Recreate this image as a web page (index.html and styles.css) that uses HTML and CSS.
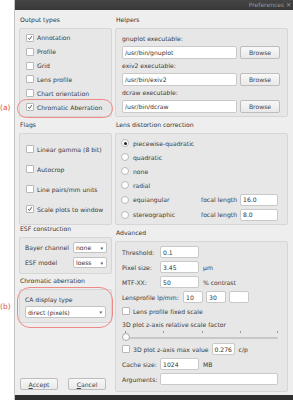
FILE: index.html
```html
<!DOCTYPE html>
<html>
<head>
<meta charset="utf-8">
<link rel="stylesheet" href="styles.css">
</head>
<body>
<div class="stage">
  <div class="gutter"></div>
  <div class="window">
    <div class="titlebar"><span class="title">Preferences ✕</span></div>
    <div class="content">
      <!-- row 1 -->
      <div class="sec-label">Output types</div>
      <div class="sec-label">Helpers</div>
      <div class="box box-output">
        <div class="crow"><span class="cb on"><svg viewBox="0 0 8 8"><path d="M1.6 4.2 L3.3 6 L6.4 1.6"/></svg></span>Annotation</div>
        <div class="crow"><span class="cb"></span>Profile</div>
        <div class="crow"><span class="cb"></span>Grid</div>
        <div class="crow"><span class="cb"></span>Lens profile</div>
        <div class="crow"><span class="cb"></span>Chart orientation</div>
        <div class="crow"><span class="cb on"><svg viewBox="0 0 8 8"><path d="M1.6 4.2 L3.3 6 L6.4 1.6"/></svg></span>Chromatic Aberration</div>
      </div>
      <div class="box box-helpers">
        <div class="hlabel">gnuplot executable:</div>
        <div class="hrow"><span class="input wide">/usr/bin/gnuplot</span><span class="btn browse">Browse</span></div>
        <div class="hlabel">exiv2 executable:</div>
        <div class="hrow"><span class="input wide">/usr/bin/exiv2</span><span class="btn browse">Browse</span></div>
        <div class="hlabel">dcraw executable:</div>
        <div class="hrow"><span class="input wide">/usr/bin/dcraw</span><span class="btn browse">Browse</span></div>
      </div>
      <!-- row 2 -->
      <div class="sec-label">Flags</div>
      <div class="sec-label">Lens distortion correction</div>
      <div class="box box-flags">
        <div class="frow"><span class="cb"></span>Linear gamma (8 bit)</div>
        <div class="frow"><span class="cb"></span>Autocrop</div>
        <div class="frow"><span class="cb"></span>Line pairs/mm units</div>
        <div class="frow"><span class="cb on"><svg viewBox="0 0 8 8"><path d="M1.6 4.2 L3.3 6 L6.4 1.6"/></svg></span>Scale plots to window</div>
      </div>
      <div class="box box-lens">
        <div class="rrow"><span class="rb on"></span>piecewise-quadratic</div>
        <div class="rrow"><span class="rb"></span>quadratic</div>
        <div class="rrow"><span class="rb"></span>none</div>
        <div class="rrow"><span class="rb"></span>radial</div>
        <div class="rrow tall"><span class="rb"></span><span class="grow">equiangular</span><span class="flabel">focal length</span><span class="input focal">16.0</span></div>
        <div class="rrow tall"><span class="rb"></span><span class="grow">stereographic</span><span class="flabel">focal length</span><span class="input focal">8.0</span></div>
      </div>
      <!-- row 3 -->
      <div class="leftcol">
        <div class="sec-label">ESF construction</div>
        <div class="box box-esf">
          <div class="erow"><span class="grow">Bayer channel</span><span class="select esf">none<i>▾</i></span></div>
          <div class="erow"><span class="grow">ESF model</span><span class="select esf">loess<i>▾</i></span></div>
        </div>
        <div class="sec-label ca-label">Chromatic aberration</div>
        <div class="box box-ca">
          <div class="ca-title">CA display type</div>
          <span class="select ca">direct (pixels)<i>▾</i></span>
        </div>
        <div class="buttons">
          <span class="btn action"><u>A</u>ccept</span>
          <span class="btn action"><u>C</u>ancel</span>
        </div>
      </div>
      <div class="rightcol">
        <div class="sec-label">Advanced</div>
        <div class="box box-adv">
          <div class="arow"><span class="alabel">Threshold:</span><span class="input num">0.1</span></div>
          <div class="arow"><span class="alabel">Pixel size:</span><span class="input num">3.45</span><span class="unit">µm</span></div>
          <div class="arow"><span class="alabel">MTF-XX:</span><span class="input num">50</span><span class="unit">% contrast</span></div>
          <div class="arow"><span class="lplabel">Lensprofile lp/mm:</span><span class="input lp">10</span><span class="input lp">30</span><span class="input lp"></span></div>
          <div class="arow chk"><span class="cb"></span>Lens profile fixed scale</div>
          <div class="arow txt">3D plot z-axis relative scale factor</div>
          <div class="slider">
            <div class="ticks"><i style="left:3px"></i><i style="left:41px"></i><i style="left:80px"></i><i style="left:118px"></i><i style="left:155px"></i></div>
            <div class="track"></div>
            <span class="handle"></span>
          </div>
          <div class="arow chk"><span class="cb"></span><span class="zlabel">3D plot z-axis max value</span><span class="input zval">0.276</span><span class="unit">c/p</span></div>
          <div class="arow cache"><span class="alabel">Cache size:</span><span class="input num">1024</span><span class="unit">MB</span></div>
          <div class="arow args"><span class="alabel">Arguments:</span><span class="input argin"></span></div>
        </div>
      </div>
    </div>
    <div class="bottombar"></div>
  </div>
  <span class="note note-a">(a)</span>
  <span class="note note-b">(b)</span>
  <span class="ring ring-a"></span>
  <span class="ring ring-b"></span>
</div>
</body>
</html>
```

FILE: styles.css
```css
* { box-sizing: border-box; }
html, body { margin: 0; padding: 0; background: #ffffff; }
body {
  font-family: "DejaVu Sans", Verdana, sans-serif;
  font-size: 6.1px;
  color: #3a3a3a;
  width: 293px;
  height: 400px;
  overflow: hidden;
}
.stage { position: relative; display: flex; width: 293px; height: 400px; }
.gutter { width: 14px; flex: none; }
.window {
  width: 279px;
  height: 400px;
  background: #eeeeee;
  display: flex;
  flex-direction: column;
  border-left: 1px solid #c4c4c4;
}
.titlebar {
  height: 10px;
  flex: none;
  background: linear-gradient(#454545, #383838);
  display: flex;
  justify-content: flex-end;
  align-items: center;
  padding-right: 2px;
}
.title { color: #9a9a9a; font-size: 6px; line-height: 10px; }
.content {
  flex: 1;
  display: grid;
  grid-template-columns: 93px 173px;
  grid-template-rows: 18px 89px 16px 92px 1fr;
  column-gap: 3px;
  padding-left: 4px;
}
.sec-label {
  display: flex;
  align-items: flex-end;
  padding: 0 0 4px 1px;
  color: #333;
  line-height: 8px;
}
.box {
  background: #e7e7e7;
  border: 1px solid #d6d6d6;
  border-radius: 2px;
}
.cb {
  width: 8px;
  height: 8px;
  flex: none;
  background: #fff;
  border: 1px solid #b8b8b8;
  border-radius: 1px;
  margin-right: 3px;
  display: inline-flex;
}
.cb svg { width: 6px; height: 6px; }
.cb svg path { fill: none; stroke: #333; stroke-width: 1.1; }
.rb {
  width: 8px;
  height: 8px;
  flex: none;
  background: #fff;
  border: 1px solid #b8b8b8;
  border-radius: 50%;
  margin-right: 4px;
  display: inline-flex;
  align-items: center;
  justify-content: center;
}
.rb.on::after { content: ""; width: 3px; height: 3px; border-radius: 50%; background: #222; }
.input {
  background: #fff;
  border: 1px solid #c9c9c9;
  border-radius: 2px;
  height: 12px;
  display: inline-flex;
  align-items: center;
  padding-left: 2px;
  color: #333;
  flex: none;
}
.btn {
  display: inline-flex;
  align-items: center;
  justify-content: center;
  background: linear-gradient(#f8f8f8, #e9e9e9);
  border: 1px solid #bdbdbd;
  border-radius: 2px;
  color: #444;
  flex: none;
}
.grow { flex: 1; }

/* output types */
.box-output { padding: 2px 0 2px 6px; display: flex; flex-direction: column; }
.crow { height: 14px; display: flex; align-items: center; }

/* helpers */
.box-helpers { padding: 3px 0 3px 6px; display: flex; flex-direction: column; }
.hlabel { height: 12px; display: flex; align-items: center; }
.hrow { height: 13px; display: flex; align-items: center; margin-top: 2px; }
.input.wide { width: 115px; height: 13px; }
.btn.browse { width: 40px; height: 13px; margin-left: 3px; }

/* flags */
.box-flags { padding: 5px 0 5px 6px; display: flex; flex-direction: column; }
.frow { height: 20px; display: flex; align-items: center; }

/* lens distortion */
.box-lens { padding: 2px 9px 2px 5px; display: flex; flex-direction: column; }
.rrow { height: 14px; display: flex; align-items: center; }
.rrow.tall { height: 15px; }
.flabel { margin-right: 3px; }
.input.focal { width: 38px; height: 12px; }

/* left bottom column */
.leftcol { display: flex; flex-direction: column; }
.box-esf { height: 37px; padding: 3px 4px 0 5px; display: flex; flex-direction: column; gap: 3px; }
.erow { height: 12px; display: flex; align-items: center; }
.select {
  background: #fff;
  border: 1px solid #c3c3c3;
  border-radius: 2px;
  display: inline-flex;
  align-items: center;
  padding-left: 2px;
  position: relative;
  color: #333;
  flex: none;
}
.select i { font-style: normal; position: absolute; right: 3px; top: 0; font-size: 5px; line-height: 10px; color: #555; }
.select.esf { width: 34px; height: 11px; }
.ca-label { height: 15px; }
.box-ca { height: 34px; padding: 4px 0 0 5px; display: flex; flex-direction: column; }
.ca-title { height: 10px; display: flex; align-items: center; }
.select.ca { width: 81px; height: 12px; margin-top: 2px; }
.select.ca i { line-height: 11px; }
.buttons { margin-top: auto; margin-bottom: 5px; display: flex; gap: 10px; padding-left: 1px; }
.btn.action { width: 38px; height: 12px; }
.btn u { text-decoration: underline; }

/* advanced */
.rightcol { display: flex; flex-direction: column; }
.rightcol .sec-label { height: 16px; }
.box-adv { height: 151px; padding: 4px 0 0 6px; display: flex; flex-direction: column; }
.arow { height: 12px; display: flex; align-items: center; margin-bottom: 3px; }
.alabel { width: 38px; flex: none; }
.input.num { width: 39px; }
.unit { margin-left: 4px; }
.lplabel { width: 61px; flex: none; }
.input.lp { width: 20px; margin-right: 3px; }
.arow.chk { height: 14px; margin: -2px 0 0; }
.arow.txt { height: 12px; margin: 0; }
.slider { position: relative; height: 14px; flex: none; margin-right: 9px; }
.ticks { position: relative; height: 4px; }
.ticks i { position: absolute; top: 1px; width: 1px; height: 2px; background: #999; }
.track { margin-top: 3px; height: 2px; background: #c8c8c8; border-radius: 1px; }
.handle {
  position: absolute;
  left: 0;
  top: 3px;
  width: 8px;
  height: 8px;
  border-radius: 50%;
  background: #fbfbfb;
  border: 1px solid #aaa;
}
.zlabel { margin-right: 3px; }
.input.zval { width: 23px; }
.arow.cache { margin-top: 2px; }
.input.argin { width: 118px; }

.bottombar { height: 5px; flex: none; background: #2e2e2e; }

/* annotations */
.note { position: absolute; left: 0; color: #e0504a; font-size: 7.5px; font-family: "DejaVu Sans", sans-serif; }
.note-a { top: 103px; }
.note-b { top: 302px; }
.ring { position: absolute; border: 1px solid #ee8a86; }
.ring-a { left: 17px; top: 99px; width: 96px; height: 19px; border-radius: 10px; }
.ring-b { left: 17px; top: 287px; width: 96px; height: 41px; border-radius: 13px; }
```
